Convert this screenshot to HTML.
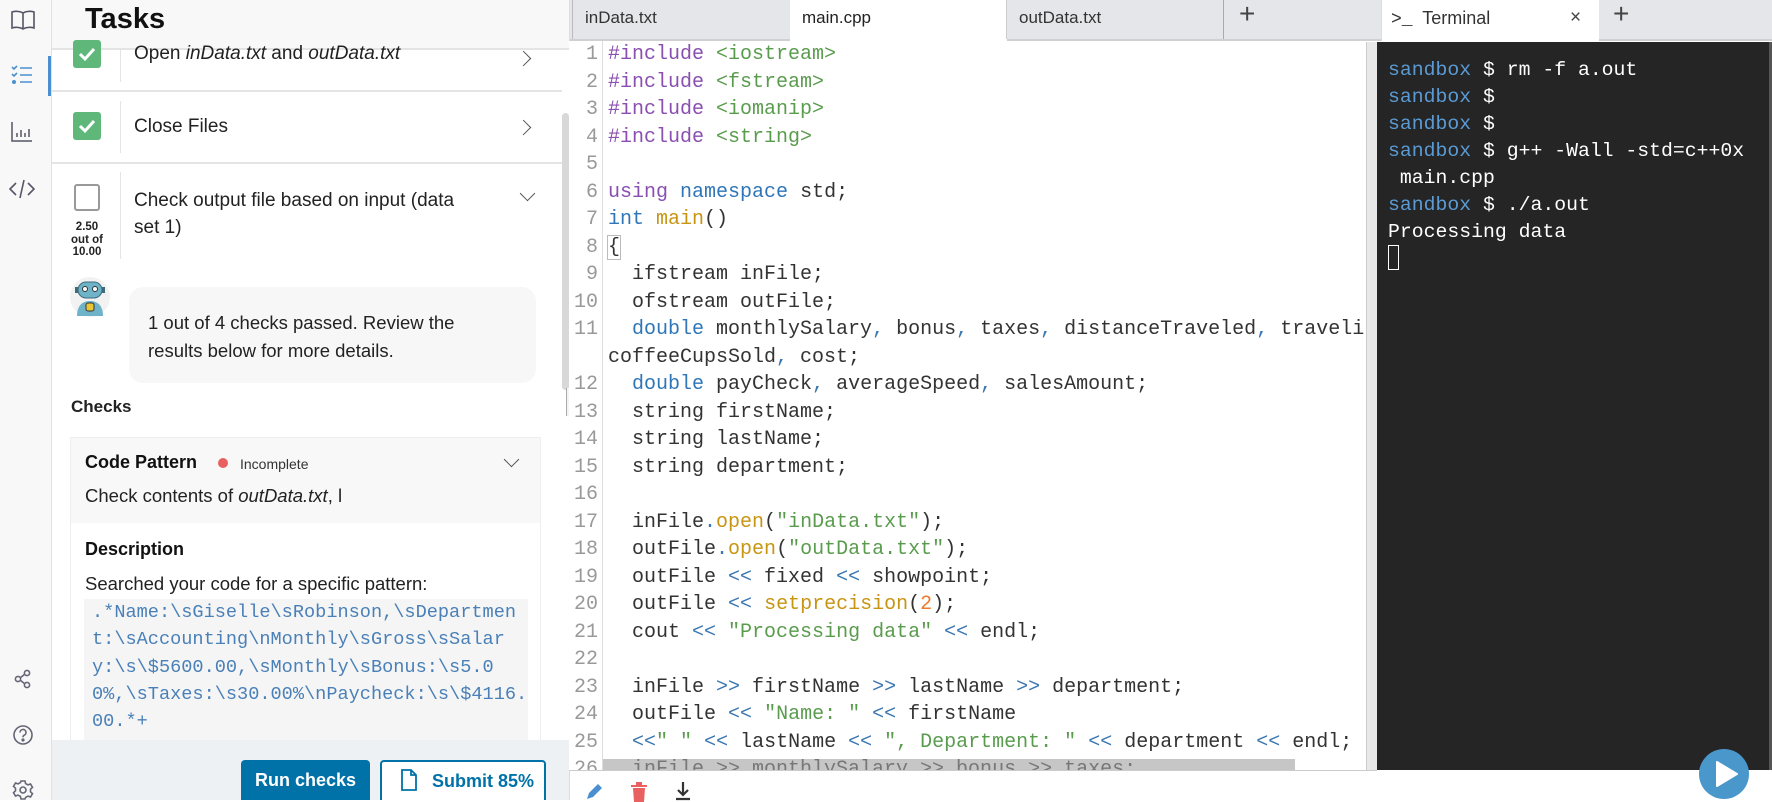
<!DOCTYPE html>
<html><head><meta charset="utf-8"><style>
*{box-sizing:border-box;margin:0;padding:0}
body{width:1772px;height:800px;overflow:hidden;background:#fff;font-family:"Liberation Sans",sans-serif;position:relative;color:#222}
.abs{position:absolute}
.nav{left:0;top:0;width:52px;height:800px;background:#f8f8f8;border-right:1px solid #e2e2e2}
.tasks{left:52px;top:0;width:517px;height:800px;background:#fff;overflow:hidden}
.row{position:absolute;left:0;width:510px;border-bottom:2px solid #e4e4e4}
.cb{position:absolute;left:21px;width:28px;height:28px;border-radius:3px;background:#5fb87a}
.cbe{background:#fff;border:2px solid #999}
.vdiv{position:absolute;left:68px;width:1px;background:#e4e4e4}
.rt{position:absolute;left:82px;font-size:19px;color:#222}
.chev{position:absolute;width:11px;height:11px;border-right:1.5px solid #555;border-bottom:1.5px solid #555}
.mono{font-family:"Liberation Mono",monospace}
.code{left:569px;top:41px;width:802px;height:730px;overflow:hidden;background:#fff}
.ln{position:absolute;left:0;width:29px;text-align:right;color:#999;font-size:20px;line-height:27.5px}
.cl{position:absolute;left:39px;font-size:20px;line-height:27.5px;white-space:pre;color:#333}
.k{color:#8a4fb0}.b{color:#2f76b8}.f{color:#c89513}.s{color:#5a9c4e}.o{color:#3a76b0}.n{color:#ee7a2a}
.term{left:1377px;top:42px;width:392px;height:728px;background:#252525;font-size:19.8px;line-height:27px;color:#fff;padding:15px 0 0 11px;white-space:pre}
.sb{color:#5b9bd5}
</style></head><body>

<div class="abs nav">
<svg class="abs" style="left:10px;top:9px" width="26" height="22" viewBox="0 0 26 22" fill="none" stroke="#556" stroke-width="1.6"><path d="M13 4C10 2 5 2 2 3v16c3-1 8-1 11 1 3-2 8-2 11-1V3c-3-1-8-1-11 1zM13 4v16"/></svg>
<svg class="abs" style="left:10px;top:64px" width="24" height="22" viewBox="0 0 24 22" fill="none" stroke="#4a90d0" stroke-width="1.6"><path d="M2 3l2 2 3-3M2 10l2 2 3-3M10 4h12M10 11h12M10 18h12"/><circle cx="4" cy="18" r="1.2" fill="#4a90d0"/></svg>
<div class="abs" style="left:48px;top:56px;width:3px;height:40px;background:#4a90d0"></div>
<svg class="abs" style="left:11px;top:121px" width="22" height="22" viewBox="0 0 22 22" fill="none" stroke="#556" stroke-width="1.5"><path d="M1 1v19h20M6 16v-4M10 16v-7M14 16v-4M18 16v-8"/></svg>
<svg class="abs" style="left:9px;top:178px" width="26" height="22" viewBox="0 0 26 22" fill="none" stroke="#556" stroke-width="1.6"><path d="M7 5l-6 6 6 6M19 5l6 6-6 6M15 2l-4 18"/></svg>
<svg class="abs" style="left:14px;top:669px" width="18" height="20" viewBox="0 0 18 20" fill="none" stroke="#667" stroke-width="1.6"><circle cx="13" cy="4" r="2.6"/><circle cx="4" cy="10" r="2.6"/><circle cx="13" cy="16" r="2.6"/><path d="M6.3 8.8l4.4-3.5M6.3 11.2l4.4 3.5"/></svg>
<svg class="abs" style="left:12px;top:724px" width="22" height="22" viewBox="0 0 22 22" fill="none" stroke="#667" stroke-width="1.6"><circle cx="11" cy="11" r="9"/><path d="M8 8.5a3 3 0 1 1 4 2.8c-.8.4-1 1-1 2"/><circle cx="11" cy="16" r=".8" fill="#667"/></svg>
<svg class="abs" style="left:12px;top:779px" width="22" height="22" viewBox="0 0 22 22" fill="none" stroke="#667" stroke-width="1.6"><circle cx="11" cy="11" r="3"/><path d="M9 2h4l.6 2.6 2.4 1.3 2.5-.9 2 3.4-2 1.8v2.6l2 1.8-2 3.4-2.5-.9-2.4 1.3L13 20H9l-.6-2.6-2.4-1.3-2.5.9-2-3.4 2-1.8V9.2L1.5 7.4l2-3.4 2.5.9 2.4-1.3z"/></svg>
</div>

<div class="abs tasks">
 <div class="abs" style="left:0;top:0;width:517px;height:50px;background:#f8f8f8;border-bottom:2px solid #e4e4e4"></div>
 <div class="abs" style="left:33px;top:3px;font-size:29px;font-weight:bold;color:#111">Tasks</div>
 <div class="row" style="top:50px;height:42px">
  <div class="cb" style="top:-10px"><svg width="28" height="28"><path d="M7 14l5 5 9-10" stroke="#fff" stroke-width="3" fill="none"/></svg></div>
  <div class="vdiv" style="top:0;height:32px"></div>
  <div class="rt" style="top:-7px">Open <i>inData.txt</i> and <i>outData.txt</i></div>
  <div class="chev" style="left:466px;top:3px;transform:rotate(-45deg)"></div>
 </div>
 <div class="row" style="top:92px;height:72px">
  <div class="cb" style="top:20px"><svg width="28" height="28"><path d="M7 14l5 5 9-10" stroke="#fff" stroke-width="3" fill="none"/></svg></div>
  <div class="vdiv" style="top:9px;height:52px"></div>
  <div class="rt" style="top:24px">Close Files</div>
  <div class="chev" style="left:466px;top:30px;transform:rotate(-45deg)"></div>
 </div>
 <div class="cb cbe" style="top:184px;left:22px;width:26px;height:27px"></div>
 <div class="abs" style="left:16px;top:221px;width:38px;text-align:center;font-size:11.5px;font-weight:bold;line-height:12.5px;color:#222">2.50<br>out of<br>10.00</div>
 <div class="vdiv" style="top:172px;height:87px"></div>
 <div class="rt" style="top:187px;line-height:27px">Check output file based on input (data<br>set 1)</div>
 <div class="chev" style="left:470px;top:188px;transform:rotate(45deg)"></div>
 <svg class="abs" style="left:17px;top:276px" width="42" height="42" viewBox="0 0 42 42"><circle cx="21" cy="21" r="20" fill="#f2f2f2"/><rect x="9" y="6" width="24" height="16" rx="8" fill="#6fb3c8" stroke="#3d6b7a"/><circle cx="16" cy="13" r="2.5" fill="#fff" stroke="#333"/><circle cx="26" cy="13" r="2.5" fill="#fff" stroke="#333"/><rect x="6" y="11" width="3" height="6" fill="#3d6b7a"/><rect x="33" y="11" width="3" height="6" fill="#3d6b7a"/><path d="M8 40c0-10 5-15 13-15s13 5 13 15z" fill="#6fb3c8"/><rect x="17" y="27" width="8" height="8" rx="2" fill="#e8c635" stroke="#333"/></svg>
 <div class="abs" style="left:77px;top:287px;width:407px;height:96px;background:#f7f7f7;border-radius:14px"></div>
 <div class="abs" style="left:96px;top:309px;font-size:18.5px;line-height:28px;color:#222">1 out of 4 checks passed. Review the<br>results below for more details.</div>
 <div class="abs" style="left:19px;top:397px;font-size:17px;font-weight:bold">Checks</div>
 <div class="abs" style="left:18px;top:437px;width:471px;height:310px;border:1px solid #eee;background:#fff"></div>
 <div class="abs" style="left:19px;top:438px;width:469px;height:85px;background:#f8f8f8"></div>
 <div class="abs" style="left:33px;top:452px;font-size:18px;font-weight:bold;color:#111">Code Pattern</div>
 <div class="abs" style="left:166px;top:458px;width:10px;height:10px;border-radius:50%;background:#e86060"></div>
 <div class="abs" style="left:188px;top:456px;font-size:14px;color:#333">Incomplete</div>
 <div class="chev" style="left:454px;top:454px;transform:rotate(45deg)"></div>
 <div class="abs" style="left:33px;top:485px;font-size:18.5px;color:#222">Check contents of <i>outData.txt</i>, l</div>
 <div class="abs" style="left:33px;top:539px;font-size:18px;font-weight:bold;color:#111">Description</div>
 <div class="abs" style="left:33px;top:573px;font-size:18.5px;color:#222">Searched your code for a specific pattern:</div>
 <div class="abs mono" style="left:32px;top:599px;width:444px;height:145px;background:#f5f5f5;padding:0 0 0 8px;font-size:18.6px;line-height:27.3px;color:#4a80b8;white-space:pre">.*Name:\sGiselle\sRobinson,\sDepartmen
t:\sAccounting\nMonthly\sGross\sSalar
y:\s\$5600.00,\sMonthly\sBonus:\s5.0
0%,\sTaxes:\s30.00%\nPaycheck:\s\$4116.
00.*+</div>
 <div class="abs" style="left:510px;top:113px;width:7px;height:277px;background:#d8d8d8;border-radius:4px"></div>
 <div class="abs" style="left:0;top:740px;width:517px;height:60px;background:#eef1f4"></div>
 <div class="abs" style="left:189px;top:760px;width:129px;height:44px;background:#0072a8;border-radius:4px;color:#fff;font-size:18px;font-weight:bold;text-align:center;line-height:40px">Run checks</div>
 <div class="abs" style="left:328px;top:760px;width:166px;height:44px;background:#fff;border:2px solid #0072a8;border-radius:4px;color:#0072a8;font-size:18px;font-weight:bold;line-height:38px;padding-left:50px">Submit 85%</div>
 <svg class="abs" style="left:349px;top:769px" width="16" height="22" viewBox="0 0 16 22" fill="none" stroke="#0072a8" stroke-width="1.8"><path d="M1 1h9l5 5v15H1zM10 1v5h5"/></svg>
</div>
<div class="abs" style="left:569px;top:0;width:1px;height:800px;background:#ddd"></div>
<div class="abs" style="left:566px;top:388px;width:6px;height:28px;border-left:1px solid #aaa;border-right:1px solid #aaa;background:#f4f4f4"></div>

<div class="abs" style="left:570px;top:0;width:807px;height:41px;background:#e4e6ea;border-bottom:2px solid #d0d0d0"></div>
<div class="abs" style="left:572px;top:0;width:218px;height:39px;border-left:1px solid #bbb;font-size:17px;padding:8px 0 0 12px;color:#333">inData.txt</div>
<div class="abs" style="left:790px;top:0;width:217px;height:41px;background:#fff;font-size:17px;padding:8px 0 0 12px;color:#222">main.cpp</div>
<div class="abs" style="left:1006px;top:0;width:218px;height:39px;border-left:1px solid #ccc;border-right:1px solid #aaa;font-size:17px;padding:8px 0 0 12px;color:#333">outData.txt</div>
<div class="abs" style="left:1239px;top:-2px;font-size:28px;color:#444">+</div>

<div class="abs code mono">
 <div class="abs" style="left:33px;top:0;width:1px;height:730px;background:#ddd"></div>
 <div class="ln">1<br>2<br>3<br>4<br>5<br>6<br>7<br>8<br>9<br>10<br>11<br>&nbsp;<br>12<br>13<br>14<br>15<br>16<br>17<br>18<br>19<br>20<br>21<br>22<br>23<br>24<br>25<br>26</div>
 <div class="abs" style="left:34px;top:718px;width:692px;height:14px;background:#c6c6c6"></div>
 <div class="cl"><span class="k">#include</span> <span class="s">&lt;iostream&gt;</span>
<span class="k">#include</span> <span class="s">&lt;fstream&gt;</span>
<span class="k">#include</span> <span class="s">&lt;iomanip&gt;</span>
<span class="k">#include</span> <span class="s">&lt;string&gt;</span>

<span class="k">using</span> <span class="b">namespace</span> std;
<span class="b">int</span> <span class="f">main</span>()
<span style="outline:1px solid #bbb">{</span>
  ifstream inFile;
  ofstream outFile;
  <span class="b">double</span> monthlySalary<span class="o">,</span> bonus<span class="o">,</span> taxes<span class="o">,</span> distanceTraveled<span class="o">,</span> travelingTime,
coffeeCupsSold<span class="o">,</span> cost;
  <span class="b">double</span> payCheck<span class="o">,</span> averageSpeed<span class="o">,</span> salesAmount;
  string firstName;
  string lastName;
  string department;

  inFile<span class="o">.</span><span class="f">open</span>(<span class="s">"inData.txt"</span>);
  outFile<span class="o">.</span><span class="f">open</span>(<span class="s">"outData.txt"</span>);
  outFile <span class="o">&lt;&lt;</span> fixed <span class="o">&lt;&lt;</span> showpoint;
  outFile <span class="o">&lt;&lt;</span> <span class="f">setprecision</span>(<span class="n">2</span>);
  cout <span class="o">&lt;&lt;</span> <span class="s">"Processing data"</span> <span class="o">&lt;&lt;</span> endl;

  inFile <span class="o">&gt;&gt;</span> firstName <span class="o">&gt;&gt;</span> lastName <span class="o">&gt;&gt;</span> department;
  outFile <span class="o">&lt;&lt;</span> <span class="s">"Name: "</span> <span class="o">&lt;&lt;</span> firstName
  <span class="o">&lt;&lt;</span><span class="s">" "</span> <span class="o">&lt;&lt;</span> lastName <span class="o">&lt;&lt;</span> <span class="s">", Department: "</span> <span class="o">&lt;&lt;</span> department <span class="o">&lt;&lt;</span> endl;
<span style="color:#777">  inFile &gt;&gt; monthlySalary &gt;&gt; bonus &gt;&gt; taxes;</span></div>
</div>
<div class="abs" style="left:1371px;top:42px;width:6px;height:728px;background:#555"></div>
<div class="abs" style="left:569px;top:770px;width:808px;height:1px;background:#ccc"></div>
<svg class="abs" style="left:584px;top:782px" width="20" height="20" viewBox="0 0 20 20"><path d="M3 17l2-6 9-9 4 4-9 9z" fill="#4a90d0"/></svg>
<svg class="abs" style="left:630px;top:782px" width="18" height="20" viewBox="0 0 18 20"><rect x="1" y="3" width="16" height="2" fill="#e86060"/><rect x="6" y="0" width="6" height="3" fill="#e86060"/><path d="M3 6h12l-1 14H4z" fill="#e86060"/></svg>
<svg class="abs" style="left:674px;top:782px" width="18" height="20" viewBox="0 0 18 20"><path d="M9 0v12M4 8l5 5 5-5M2 17h14" stroke="#333" stroke-width="2.2" fill="none"/></svg>

<div class="abs" style="left:1377px;top:0;width:395px;height:41px;background:#e4e6ea;border-bottom:2px solid #d0d0d0"></div>
<div class="abs" style="left:1381px;top:0;width:218px;height:41px;background:#fff;border-left:1px solid #ddd"></div>
<div class="abs" style="left:1391px;top:8px;font-size:18px;color:#333"><span style="font-family:'Liberation Mono',monospace">&gt;_</span>&nbsp; Terminal</div>
<div class="abs" style="left:1570px;top:7px;font-size:19px;color:#444">×</div>
<div class="abs" style="left:1613px;top:-2px;font-size:28px;color:#444">+</div>
<div class="abs" style="left:1366px;top:42px;width:11px;height:728px;background:#e8e8e8;border-left:1px solid #ccc"></div>
<div class="abs term mono"><span class="sb">sandbox</span> $ rm -f a.out
<span class="sb">sandbox</span> $
<span class="sb">sandbox</span> $
<span class="sb">sandbox</span> $ g++ -Wall -std=c++0x
 main.cpp
<span class="sb">sandbox</span> $ ./a.out
Processing data
</div>
<div class="abs" style="left:1388px;top:245px;width:11px;height:25px;border:1.5px solid #fff"></div>
<div class="abs" style="left:1769px;top:42px;width:3px;height:728px;background:#555"></div>
<div class="abs" style="left:1699px;top:749px;width:50px;height:50px;border-radius:50%;background:#4a97cc"></div>
<svg class="abs" style="left:1715px;top:760px" width="24" height="28" viewBox="0 0 24 28"><path d="M2 2l20 12L2 26z" fill="#fff" stroke="#fff" stroke-width="2" stroke-linejoin="round"/></svg>
</body></html>
